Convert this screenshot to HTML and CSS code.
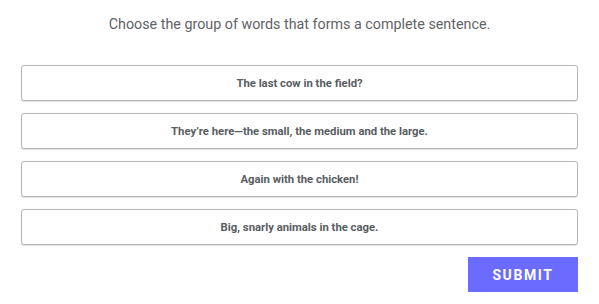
FILE: index.html
```html
<!DOCTYPE html>
<html>
<head>
<meta charset="utf-8">
<link rel="stylesheet" href="styles.css">
</head>
<body>
<div class="quiz">
  <h1 class="prompt">Choose the group of words that forms a complete sentence.</h1>
  <div class="options">
    <button class="option">The last cow in the field?</button>
    <button class="option">They’re here—the small, the medium and the large.</button>
    <button class="option">Again with the chicken!</button>
    <button class="option">Big, snarly animals in the cage.</button>
  </div>
  <div class="actions">
    <button class="submit">SUBMIT</button>
  </div>
</div>
</body>
</html>
```
FILE: styles.css
```css
html, body {
  margin: 0;
  padding: 0;
  background: #ffffff;
}
.quiz {
  font-family: Roboto, "Liberation Sans", sans-serif;
  padding: 13px 21px 0 21px;
}
.prompt {
  margin: 0;
  font-size: 14.3px;
  font-weight: 400;
  color: #5f6368;
  text-align: center;
  line-height: 22px;
}
.options {
  display: flex;
  flex-direction: column;
  gap: 12px;
  margin-top: 30px;
}
.option {
  display: block;
  width: 100%;
  height: 36px;
  background: #fff;
  border: 1px solid #b5b5b5;
  border-radius: 3px;
  box-shadow: 0 1px 1px rgba(0,0,0,0.12);
  font-family: Roboto, "Liberation Sans", sans-serif;
  font-size: 11.3px;
  font-weight: 700;
  color: #585d63;
  text-align: center;
  padding: 0;
}
.actions {
  display: flex;
  justify-content: flex-end;
  margin-top: 12px;
}
.submit {
  width: 110px;
  height: 35px;
  background: #6b6bff;
  border: none;
  border-radius: 0;
  color: #fff;
  font-family: Roboto, "Liberation Sans", sans-serif;
  font-size: 14px;
  font-weight: 700;
  letter-spacing: 1.6px;
  padding: 0;
}
```
